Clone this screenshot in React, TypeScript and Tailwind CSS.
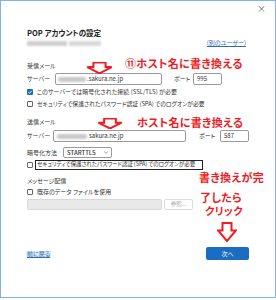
import React from "react";

function DownArrow({ className }: { className: string }) {
  return (
    <svg viewBox="0 0 20 20" preserveAspectRatio="none" className={className}>
      <path
        d="M5.5 1 H14.5 V8.5 H19 L10 19 L1 8.5 H5.5 Z"
        fill="white"
        stroke="#ee1c25"
        strokeWidth="2"
        vectorEffect="non-scaling-stroke"
      />
    </svg>
  );
}

function Check({ checked }: { checked?: boolean }) {
  if (checked) {
    return (
      <span className="w-[6px] h-[6px] shrink-0 rounded-[1px] bg-[#1a6dc2] flex items-center justify-center">
        <svg viewBox="0 0 6 6" className="w-[6px] h-[6px]">
          <path d="M1.2 3.1 L2.5 4.3 L4.9 1.6" fill="none" stroke="white" strokeWidth="0.9" />
        </svg>
      </span>
    );
  }
  return <span className="w-[6px] h-[6px] shrink-0 rounded-[1px] border border-[#666] bg-white" />;
}

function Blur({ w }: { w: string }) {
  return (
    <span className={`${w} h-[5px] rounded-[2px] bg-[#c9c9c9] blur-[1.2px]`} />
  );
}

export default function App() {
  return (
    <div className="w-[276px] h-[300px] bg-white">
      <div className="relative w-[276px] h-[298px] border border-[#7db3e6] bg-white text-[#333] font-['Noto_Sans_CJK_JP','Noto_Sans',sans-serif] [font-feature-settings:'palt']">
        <div className="h-[14px] flex justify-end items-center pr-[9px] text-[9px] leading-none text-[#666]">
          ×
        </div>

        <div className="px-[26px]">
          <div className="mt-[13px] h-[10px] flex items-center text-[7.5px] font-bold text-[#222] leading-none">
            POP アカウントの設定
          </div>
          <div className="h-[10px] flex items-center justify-between pr-[3px]">
            <span className="flex items-center gap-[2px]">
              <span className="w-[40px] h-[5px] bg-[#cfcfcf] blur-[1.2px]" />
              <span className="w-[32px] h-[5px] bg-[#d8d8d8] blur-[1.2px]" />
            </span>
            <span className="text-[6px] leading-none text-[#2a6ebb] underline">(別のユーザー)</span>
          </div>

          <div className="mt-[14px] h-[8px] flex items-center text-[6px] leading-none">受信メール</div>
          <div className="mt-[3px] h-[12px] flex items-center text-[6px] leading-none">
            <span className="w-[28px]">サーバー</span>
            <span className="w-[107px] h-[12px] border border-[#9a9a9a] rounded-[2px] flex items-center pl-[2px] gap-[1px]">
              <Blur w="w-[28px]" />
              <span>.sakura.ne.jp</span>
            </span>
            <span className="ml-[12px] w-[19px]">ポート</span>
            <span className="w-[29px] h-[12px] border border-[#9a9a9a] rounded-[2px] flex items-center pl-[3px]">995</span>
          </div>
          <div className="mt-[2px] h-[10px] flex items-center gap-[4px] text-[6px] leading-none">
            <Check checked />
            <span>このサーバーでは暗号化された接続 (SSL/TLS) が必要</span>
          </div>
          <div className="mt-[2px] h-[10px] flex items-center gap-[4px] text-[5.8px] leading-none whitespace-nowrap">
            <Check />
            <span>セキュリティで保護されたパスワード認証 (SPA) でのログオンが必要</span>
          </div>

          <div className="mt-[9px] h-[8px] flex items-center text-[6px] leading-none">送信メール</div>
          <div className="mt-[4px] h-[12px] flex items-center text-[6px] leading-none">
            <span className="w-[26px]">サーバー</span>
            <span className="w-[133px] h-[12px] border border-[#9a9a9a] rounded-[2px] flex items-center pl-[3px] gap-[2px]">
              <Blur w="w-[30px]" />
              <span>sakura.ne.jp</span>
            </span>
            <span className="ml-[13px] w-[21px]">ポート</span>
            <span className="w-[29px] h-[12px] border border-[#9a9a9a] rounded-[2px] flex items-center pl-[3px]">587</span>
          </div>
          <div className="mt-[5px] h-[11px] flex items-center text-[6px] leading-none">
            <span className="w-[36px]">暗号化方法</span>
            <span className="w-[49px] h-[11px] border border-[#9a9a9a] rounded-[2px] flex items-center justify-between px-[3px] font-medium">
              <span>STARTTLS</span>
              <svg viewBox="0 0 6 4" className="w-[4px] h-[3px]">
                <path d="M0.5 0.8 L3 3.2 L5.5 0.8" fill="none" stroke="#555" strokeWidth="0.9" />
              </svg>
            </span>
          </div>
          <div className="mt-[2px] h-[10px] flex items-center gap-[2px] leading-none">
            <Check />
            <span className="w-[168px] h-[10px] border border-[#222] flex items-center pl-[1px] overflow-hidden whitespace-nowrap text-[5.6px] tracking-[-0.1px]">
              セキュリティで保護されたパスワード認証 (SPA) でのログオンが必要
            </span>
          </div>

          <div className="mt-[7px] h-[8px] flex items-center text-[6px] leading-none">メッセージ配信</div>
          <div className="mt-[2px] h-[10px] flex items-center gap-[4px] text-[6px] leading-none">
            <Check />
            <span>既存のデータ ファイルを使用</span>
          </div>
          <div className="mt-[2px] h-[11px] flex items-center gap-[2px]">
            <span className="w-[135px] h-[11px] rounded-[2px] border border-[#d8d8d8] bg-[#e9e9e9]" />
            <span className="w-[29px] h-[11px] rounded-[2px] border border-[#dcdcdc] flex items-center justify-center text-[5.5px] leading-none text-[#a8a8a8]">
              参照...
            </span>
          </div>

          <div className="mt-[37px] h-[13px] flex items-center justify-between">
            <span className="text-[6px] leading-none text-[#2d6db5] underline bg-[#dbe8f6] px-[1px] -ml-[1px]">前に戻る</span>
            <span className="w-[43px] h-[13px] rounded-[2px] bg-[#1a6dc2] flex items-center justify-center text-[6px] leading-none text-white">
              次へ
            </span>
          </div>
        </div>

        <DownArrow className="absolute left-[85px] top-[61px] w-[27px] h-[12px]" />
        <DownArrow className="absolute left-[96px] top-[117px] w-[26px] h-[11px]" />
        <DownArrow className="absolute left-[216px] top-[221px] w-[20px] h-[20px]" />

        <div className="absolute left-[124px] top-[57px] text-[11px] leading-none font-bold tracking-[0.3px] text-[#ee1c25] whitespace-nowrap">
          ⑪ホスト名に書き換える
        </div>
        <div className="absolute left-[136px] top-[116px] text-[11px] leading-none font-bold tracking-[0.3px] text-[#ee1c25] whitespace-nowrap">
          ホスト名に書き換える
        </div>
        <div className="absolute left-[198px] top-[171px] text-[11px] leading-none font-bold tracking-[0.3px] text-[#ee1c25] whitespace-nowrap">
          書き換えが完
        </div>
        <div className="absolute left-[199px] top-[190px] text-[11px] leading-[12.5px] font-bold tracking-[0.3px] text-[#ee1c25] whitespace-nowrap">
          了したら
          <br />
          <span className="pl-[5px] text-[10.5px]">クリック</span>
        </div>
      </div>
    </div>
  );
}
